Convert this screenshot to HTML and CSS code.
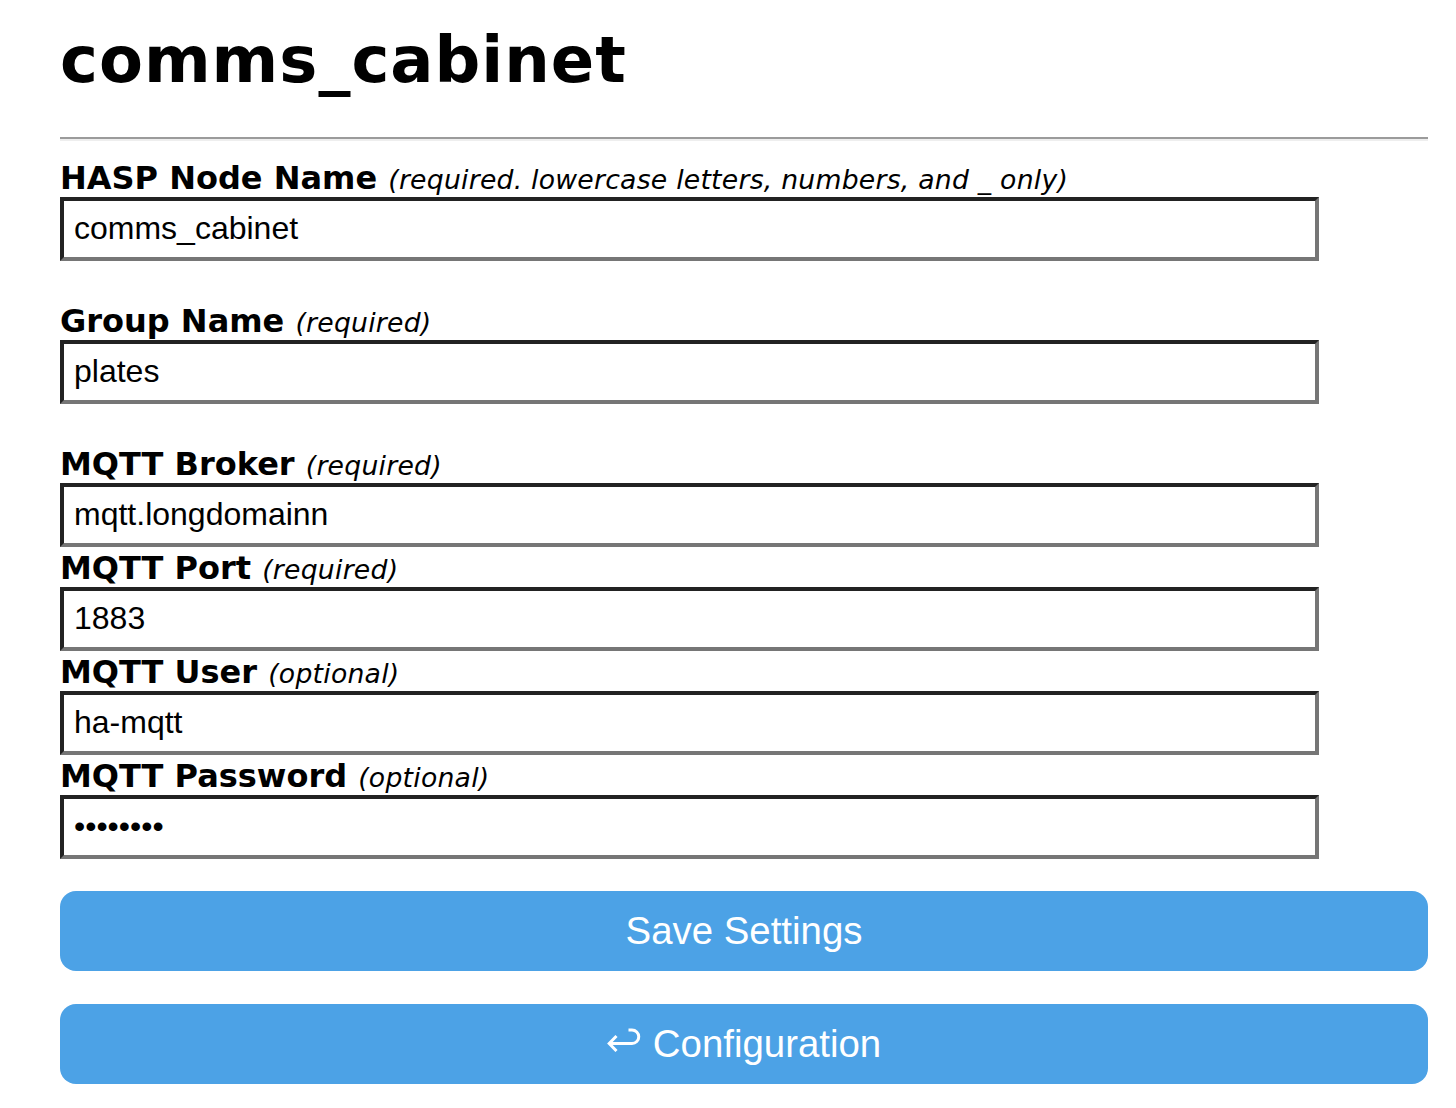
FILE: index.html
```html
<!DOCTYPE html>
<html lang="en">
<head>
<meta charset="utf-8">
<title>comms_cabinet</title>
<link rel="stylesheet" href="styles.css">
</head>
<body>
<div class="page">
  <h1 class="title">comms_cabinet</h1>
  <hr class="rule">
  <form class="settings">
    <div class="field">
      <label class="label" for="name"><b>HASP Node Name</b> <i>(required. lowercase letters, numbers, and _ only)</i></label>
      <input class="input" id="name" type="text" value="comms_cabinet">
    </div>
    <div class="gap"></div>
    <div class="field">
      <label class="label" for="group"><b>Group Name</b> <i>(required)</i></label>
      <input class="input" id="group" type="text" value="plates">
    </div>
    <div class="gap"></div>
    <div class="field">
      <label class="label" for="broker"><b>MQTT Broker</b> <i>(required)</i></label>
      <input class="input" id="broker" type="text" value="mqtt.longdomainn">
    </div>
    <div class="field">
      <label class="label" for="port"><b>MQTT Port</b> <i>(required)</i></label>
      <input class="input" id="port" type="text" value="1883">
    </div>
    <div class="field">
      <label class="label" for="user"><b>MQTT User</b> <i>(optional)</i></label>
      <input class="input" id="user" type="text" value="ha-mqtt">
    </div>
    <div class="field">
      <label class="label" for="pass"><b>MQTT Password</b> <i>(optional)</i></label>
      <input class="input" id="pass" type="password" value="xxxxxxxx">
    </div>
    <button class="btn btn-save" type="button">Save Settings</button>
  </form>
  <button class="btn btn-back" type="button"><svg class="back-icon" width="34" height="26" viewBox="0 0 34 26" aria-hidden="true"><path d="M9.5 10 L2.2 17.5 L9.5 25" fill="none" stroke="#fff" stroke-width="3" stroke-linejoin="miter"/><path d="M2.5 17.5 H25 A6.75 6.75 0 0 0 25 4 H21.5" fill="none" stroke="#fff" stroke-width="3"/></svg><span>Configuration</span></button>
</div>
</body>
</html>
```

FILE: styles.css
```css
html, body {
  margin: 0;
  padding: 0;
  background: #fff;
}

.page {
  padding: 0 28px 0 60px;
  color: #000;
  font-family: "DejaVu Sans", Verdana, sans-serif;
}

.title {
  margin: 23px 0 0;
  font: bold 64px/74px "DejaVu Sans", Verdana, sans-serif;
  letter-spacing: 1px;
  color: #000;
}

.rule {
  margin: 40px 0 0;
  height: 0;
  border: 0;
  border-top: 2px solid #9b9b9b;
  border-bottom: 2px solid #eeeeee;
}

.settings {
  margin: 16px 0 0;
}

.field {
  display: flex;
  flex-direction: column;
}

.label {
  display: block;
  font: bold 32px/40px "DejaVu Sans", Verdana, sans-serif;
  white-space: nowrap;
  padding-top: 1px;
  margin-bottom: -1px;
}

.label b {
  font-weight: bold;
}

.label i {
  font-weight: normal;
  font-style: italic;
  font-size: 26.67px;
  line-height: 1;
  letter-spacing: 0.24px;
}

.input {
  display: block;
  box-sizing: border-box;
  width: 92%;
  height: 64px;
  margin: 0;
  padding: 0 10px 2px;
  border-width: 4px;
  border-style: solid;
  border-color: #222222 #767676 #767676 #222222;
  border-radius: 0;
  background: #fff;
  color: #000;
  font: 32px "Liberation Sans", Arial, sans-serif;
  outline: none;
}

.gap {
  height: 39px;
}

.btn {
  display: flex;
  align-items: center;
  justify-content: center;
  gap: 12px;
  box-sizing: border-box;
  width: 100%;
  height: 80px;
  margin: 32px 0 0;
  padding: 0;
  border: 0;
  border-radius: 16px;
  background: #4ca2e6;
  color: #fff;
  font: 38.4px "Liberation Sans", Arial, sans-serif;
}

.btn-back {
  margin-top: 33px;
}

.back-icon {
  display: block;
  flex: none;
  margin-bottom: 10px;
}
```
